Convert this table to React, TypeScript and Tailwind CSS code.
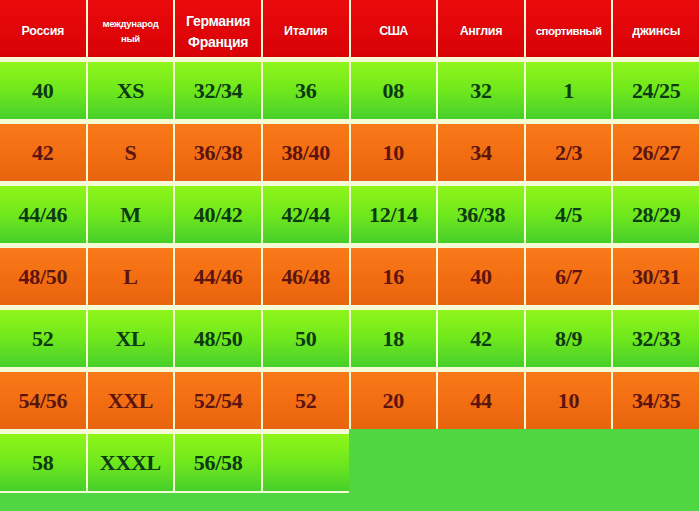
import React from "react";

const rows: string[][] = [
  ["40", "XS", "32/34", "36", "08", "32", "1", "24/25"],
  ["42", "S", "36/38", "38/40", "10", "34", "2/3", "26/27"],
  ["44/46", "M", "40/42", "42/44", "12/14", "36/38", "4/5", "28/29"],
  ["48/50", "L", "44/46", "46/48", "16", "40", "6/7", "30/31"],
  ["52", "XL", "48/50", "50", "18", "42", "8/9", "32/33"],
  ["54/56", "XXL", "52/54", "52", "20", "44", "10", "34/35"],
];

const last = ["58", "XXXL", "56/58", ""];

function HeaderCell({ children }: { children: React.ReactNode }) {
  return (
    <div className="h-[57px] flex items-center justify-center text-center pt-[6px] text-white font-bold bg-gradient-to-b from-[#ea0a0c] to-[#d80206] leading-[1.15] [text-shadow:0_0_1px_rgba(0,0,0,0.3)]">
      {children}
    </div>
  );
}

function GreenCell({ v }: { v: string }) {
  return (
    <div className="h-[57px] flex items-center justify-center bg-gradient-to-b from-[#90f51a] via-[#6fe81c] to-[#45cf2a] text-[#0c3a12] text-[22px] font-bold tracking-[-0.3px]">
      {v}
    </div>
  );
}

function OrangeCell({ v }: { v: string }) {
  return (
    <div className="h-[57px] flex items-center justify-center bg-gradient-to-b from-[#f97a1a] via-[#f36e12] to-[#e8640e] text-[#5c1410] text-[22px] font-bold tracking-[-0.3px]">
      {v}
    </div>
  );
}

export default function App() {
  return (
    <div
      className="w-[699px] h-[511px] bg-[#4fd640] overflow-hidden flex flex-col"
      style={{ fontFamily: '"Liberation Serif", "DejaVu Serif", serif' }}
    >
      <div className="bg-[#f3fad4] flex flex-col gap-[5px] pb-0">
        <div
          className="grid grid-cols-8 gap-x-[2px]"
          style={{ fontFamily: '"Liberation Sans", "Open Sans", sans-serif' }}
        >
          <HeaderCell>
            <span className="text-[12.5px] tracking-[-0.3px]">Россия</span>
          </HeaderCell>
          <HeaderCell>
            <span className="text-[9.5px] leading-[1.5] tracking-[-0.3px]">
              международ
              <br />
              ный
            </span>
          </HeaderCell>
          <HeaderCell>
            <span className="text-[14px] leading-[1.45] tracking-[-0.3px]">
              Германия
              <br />
              Франция
            </span>
          </HeaderCell>
          <HeaderCell>
            <span className="text-[12.5px] tracking-[-0.3px]">Италия</span>
          </HeaderCell>
          <HeaderCell>
            <span className="text-[12.5px] tracking-[-0.8px]">США</span>
          </HeaderCell>
          <HeaderCell>
            <span className="text-[12.5px] tracking-[-0.3px]">Англия</span>
          </HeaderCell>
          <HeaderCell>
            <span className="text-[11.5px] tracking-[-0.5px]">спортивный</span>
          </HeaderCell>
          <HeaderCell>
            <span className="text-[12.5px] tracking-[-0.3px]">джинсы</span>
          </HeaderCell>
        </div>
        {rows.map((r, i) => (
          <div key={i} className="grid grid-cols-8 gap-x-[2px]">
            {r.map((v, j) =>
              i % 2 === 0 ? <GreenCell key={j} v={v} /> : <OrangeCell key={j} v={v} />
            )}
          </div>
        ))}
      </div>
      <div className="grid grid-cols-8 gap-x-[2px]">
        <div className="col-span-4 grid grid-cols-4 gap-x-[2px] bg-[#f3fad4] pt-[5px] pb-[2px]">
          {last.map((v, j) => (
            <GreenCell key={j} v={v} />
          ))}
        </div>
      </div>
    </div>
  );
}
